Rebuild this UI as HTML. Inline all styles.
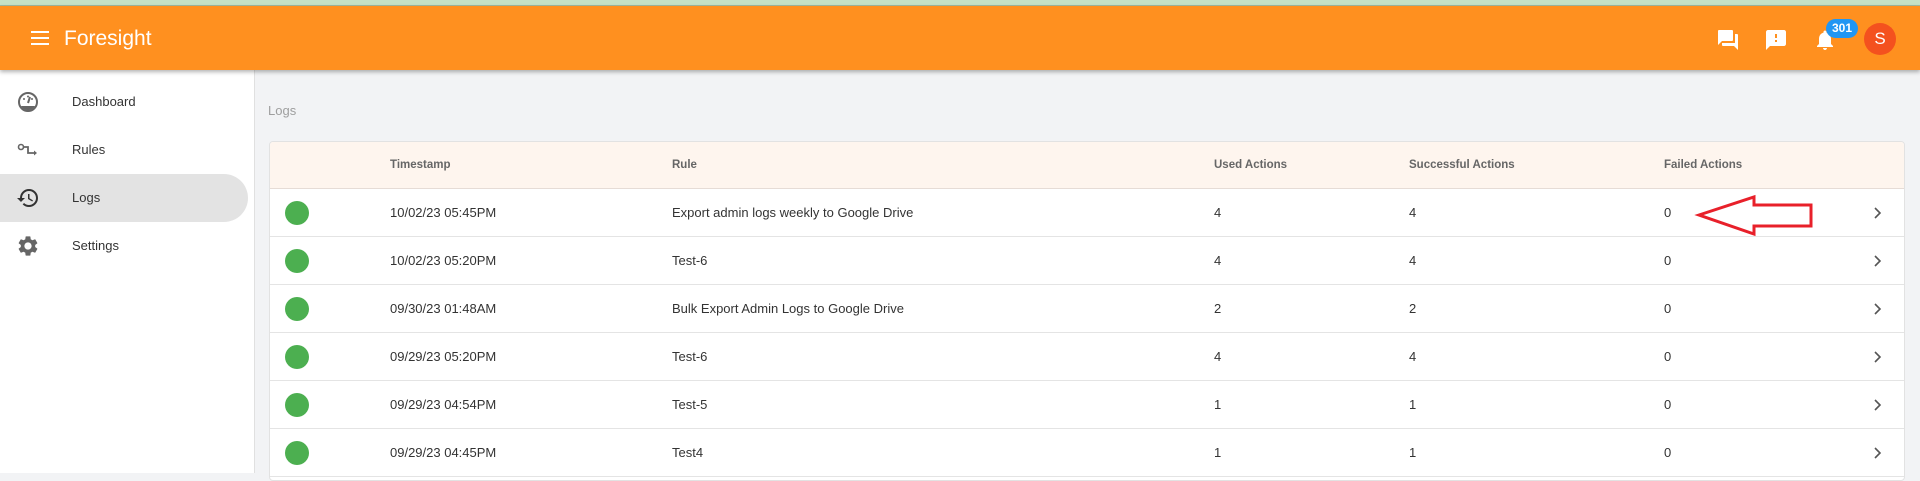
<!DOCTYPE html>
<html><head><meta charset="utf-8"><style>
*{box-sizing:border-box;margin:0;padding:0}
body{width:1920px;height:473px;overflow:hidden;background:#f2f3f5;font-family:"Liberation Sans",Arial,sans-serif;position:relative;color:#333}
.strip{position:absolute;left:0;top:0;width:1920px;height:6px;background:#c5e1c5;border-bottom:1px solid #9fb89f}
.hdr{position:absolute;left:0;top:6px;width:1920px;height:64px;background:#ff901f;box-shadow:0 2px 4px rgba(0,0,0,.3);z-index:2}
.title{position:absolute;left:64px;top:21px;color:#fff;font-size:21px}
.side{position:absolute;left:0;top:70px;width:255px;height:403px;background:#fff;border-right:1px solid #e0e0e0}
.nav{position:absolute;left:0;height:48px;width:248px;font-size:13px;color:#333;line-height:48px;padding-left:72px}
.nav.act{background:#e3e3e3;border-radius:0 24px 24px 0}
.nav svg{position:absolute;left:16px;top:12px}
.logs{position:absolute;left:268px;top:103px;font-size:13px;color:#9e9e9e}
.card{position:absolute;left:269px;top:141px;width:1636px;height:340px;background:#fff;border:1px solid #e2e2e2;border-radius:4px;overflow:hidden}
.th{height:47px;background:#fef5ee;border-bottom:1px solid #e6dcd6;position:relative}
.th span{position:absolute;top:17px;font-size:11.5px;font-weight:bold;color:#666}
.row{height:48px;border-bottom:1px solid #e4e4e4;position:relative}
.row span{position:absolute;top:16px;font-size:13px;color:#333}
.dot{position:absolute;left:15px;top:12px;width:24px;height:24px;border-radius:50%;background:#4caf50}
.chev{position:absolute;left:1600px;top:16px}
</style></head><body>
<div class="strip"></div>
<div class="hdr">
<svg style="position:absolute;left:30px;top:23px" width="20" height="18" viewBox="0 0 20 18"><rect x="1" y="2" width="18" height="2" fill="#fff"/><rect x="1" y="8" width="18" height="2" fill="#fff"/><rect x="1" y="14" width="18" height="2" fill="#fff"/></svg>
<div class="title">Foresight</div>
<svg style="position:absolute;left:1716px;top:22px" width="24" height="24" viewBox="0 0 24 24"><path fill="#fff" d="M21 6h-2v9H6v2c0 .55.45 1 1 1h11l4 4V7c0-.55-.45-1-1-1zm-4 6V3c0-.55-.45-1-1-1H3c-.55 0-1 .45-1 1v14l4-4h10c.55 0 1-.45 1-1z"/></svg>
<svg style="position:absolute;left:1764px;top:22px" width="24" height="24" viewBox="0 0 24 24"><path fill="#fff" d="M20 2H4c-1.1 0-2 .9-2 2v18l4-4h14c1.1 0 2-.9 2-2V4c0-1.1-.9-2-2-2zm-7 12h-2v-2h2v2zm0-4h-2V6h2v4z"/></svg>
<svg style="position:absolute;left:1813px;top:22px" width="24" height="24" viewBox="0 0 24 24"><path fill="#fff" d="M12 22c1.1 0 2-.9 2-2h-4c0 1.1.9 2 2 2zm6-6v-5c0-3.07-1.64-5.640-4.5-6.32V4c0-.83-.67-1.5-1.5-1.5s-1.5.67-1.5 1.5v.68C7.63 5.36 6 7.92 6 11v5l-2 2v1h16v-1l-2-2z"/></svg>
<div style="position:absolute;left:1826px;top:13px;width:32px;height:19px;border-radius:10px;background:#2196f3;color:#fff;font-size:12px;font-weight:bold;text-align:center;line-height:19px">301</div>
<div style="position:absolute;left:1864px;top:17px;width:32px;height:32px;border-radius:50%;background:#f4511e;color:#fff;font-size:17px;text-align:center;line-height:32px">S</div>
</div>
<div class="side">
<div class="nav" style="top:8px"><svg width="24" height="24" viewBox="0 0 24 24"><circle cx="12" cy="12" r="9" fill="none" stroke="#666" stroke-width="2"/><path d="M5 16a8 8 0 0 0 14 0z" fill="#666"/><path d="M12 13l2-6" stroke="#666" stroke-width="2"/><circle cx="8" cy="9" r="1" fill="#666"/><circle cx="12" cy="6.5" r="1" fill="#666"/><circle cx="16" cy="9" r="1" fill="#666"/></svg>Dashboard</div>
<div class="nav" style="top:56px"><svg width="24" height="24" viewBox="0 0 24 24"><circle cx="5" cy="9" r="2.5" fill="none" stroke="#666" stroke-width="1.6"/><path d="M7.5 9H12v6h7" fill="none" stroke="#666" stroke-width="1.8"/><path d="M18 12.5l3 2.5-3 2.5z" fill="#666"/></svg>Rules</div>
<div class="nav act" style="top:104px"><svg width="24" height="24" viewBox="0 0 24 24"><path fill="#333" d="M13 3a9 9 0 0 0-9 9H1l3.89 3.89.07.14L9 12H6c0-3.87 3.13-7 7-7s7 3.13 7 7-3.13 7-7 7c-1.930 0-3.68-.79-4.94-2.06l-1.42 1.42A8.954 8.954 0 0 0 13 21a9 9 0 0 0 0-18zm-1 5v5l4.28 2.54.72-1.21-3.5-2.080V8H12z"/></svg>Logs</div>
<div class="nav" style="top:152px"><svg width="24" height="24" viewBox="0 0 24 24"><path fill="#666" d="M19.14 12.94c.04-.3.06-.61.06-.94 0-.32-.02-.64-.07-.94l2.03-1.58a.49.49 0 0 0 .12-.61l-1.92-3.32a.488.488 0 0 0-.59-.22l-2.39.96c-.5-.38-1.03-.7-1.62-.94l-.36-2.54a.484.484 0 0 0-.48-.41h-3.84c-.24 0-.43.17-.47.41l-.36 2.54c-.59.24-1.13.57-1.62.94l-2.39-.96c-.22-.08-.47 0-.59.22L2.74 8.87c-.12.21-.08.47.12.61l2.03 1.58c-.05.3-.09.63-.09.94s.02.64.07.94l-2.03 1.58a.49.49 0 0 0-.12.61l1.92 3.32c.12.22.37.29.59.22l2.39-.96c.5.38 1.03.7 1.62.94l.36 2.54c.05.24.24.41.48.41h3.84c.24 0 .44-.17.47-.41l.36-2.54c.59-.24 1.13-.56 1.62-.94l2.39.96c.22.08.47 0 .59-.22l1.92-3.32c.12-.22.07-.47-.12-.61l-2.01-1.58zM12 15.6c-1.98 0-3.6-1.62-3.6-3.6s1.62-3.6 3.6-3.6 3.6 1.62 3.6 3.6-1.62 3.6-3.6 3.6z"/></svg>Settings</div>
</div>
<div class="logs">Logs</div>
<div class="card">
<div class="th"><span style="left:120px">Timestamp</span><span style="left:402px">Rule</span><span style="left:944px">Used Actions</span><span style="left:1139px">Successful Actions</span><span style="left:1394px">Failed Actions</span></div>
<div class="row"><div class="dot"></div><span style="left:120px">10/02/23 05:45PM</span><span style="left:402px">Export admin logs weekly to Google Drive</span><span style="left:944px">4</span><span style="left:1139px">4</span><span style="left:1394px">0</span><svg class="chev" width="16" height="16" viewBox="0 0 16 16"><path d="M5 3l5 5-5 5" fill="none" stroke="#555" stroke-width="1.6"/></svg></div>
<div class="row"><div class="dot"></div><span style="left:120px">10/02/23 05:20PM</span><span style="left:402px">Test-6</span><span style="left:944px">4</span><span style="left:1139px">4</span><span style="left:1394px">0</span><svg class="chev" width="16" height="16" viewBox="0 0 16 16"><path d="M5 3l5 5-5 5" fill="none" stroke="#555" stroke-width="1.6"/></svg></div>
<div class="row"><div class="dot"></div><span style="left:120px">09/30/23 01:48AM</span><span style="left:402px">Bulk Export Admin Logs to Google Drive</span><span style="left:944px">2</span><span style="left:1139px">2</span><span style="left:1394px">0</span><svg class="chev" width="16" height="16" viewBox="0 0 16 16"><path d="M5 3l5 5-5 5" fill="none" stroke="#555" stroke-width="1.6"/></svg></div>
<div class="row"><div class="dot"></div><span style="left:120px">09/29/23 05:20PM</span><span style="left:402px">Test-6</span><span style="left:944px">4</span><span style="left:1139px">4</span><span style="left:1394px">0</span><svg class="chev" width="16" height="16" viewBox="0 0 16 16"><path d="M5 3l5 5-5 5" fill="none" stroke="#555" stroke-width="1.6"/></svg></div>
<div class="row"><div class="dot"></div><span style="left:120px">09/29/23 04:54PM</span><span style="left:402px">Test-5</span><span style="left:944px">1</span><span style="left:1139px">1</span><span style="left:1394px">0</span><svg class="chev" width="16" height="16" viewBox="0 0 16 16"><path d="M5 3l5 5-5 5" fill="none" stroke="#555" stroke-width="1.6"/></svg></div>
<div class="row"><div class="dot"></div><span style="left:120px">09/29/23 04:45PM</span><span style="left:402px">Test4</span><span style="left:944px">1</span><span style="left:1139px">1</span><span style="left:1394px">0</span><svg class="chev" width="16" height="16" viewBox="0 0 16 16"><path d="M5 3l5 5-5 5" fill="none" stroke="#555" stroke-width="1.6"/></svg></div>
</div>
<svg style="position:absolute;left:0;top:0" width="1920" height="473"><polygon points="1699,215 1754,197 1754,205 1811,205 1811,226 1754,226 1754,234" fill="none" stroke="#e8202a" stroke-width="3" stroke-linejoin="miter"/></svg>
</body></html>
